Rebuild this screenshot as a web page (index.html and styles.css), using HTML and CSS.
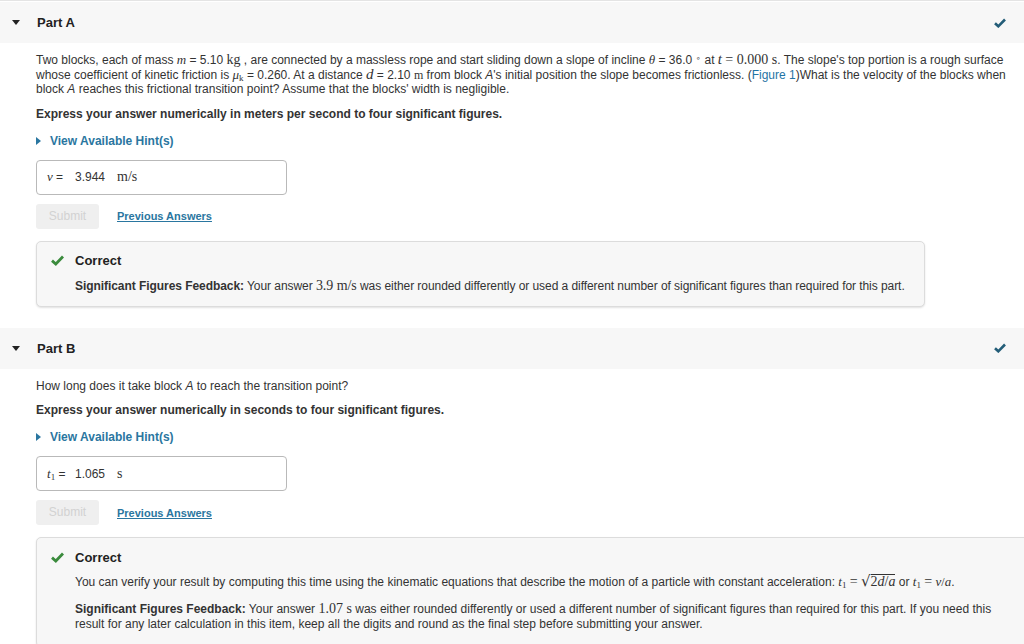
FILE: index.html
```html
<!DOCTYPE html>
<html>
<head>
<meta charset="utf-8">
<link rel="stylesheet" href="styles.css">
</head>
<body>
<div class="part">
  <div class="part-header">
    <span class="caret"></span>
    <span class="part-title">Part A</span>
    <svg class="done" width="12" height="10" viewBox="0 0 12 10"><path d="M1 5.2 L4.3 8.3 L11 1.5" fill="none" stroke="#235d78" stroke-width="2.6"/></svg>
  </div>
  <div class="part-body">
    <p class="problem">Two blocks, each of mass <i class="m">m</i> = 5.10 <span class="mr big">kg</span> , are connected by a massless rope and start sliding down a slope of incline <i class="m">θ</i> = 36.0 <sup class="deg">∘</sup> at <i class="m big">t</i> <span class="mr big">= 0.000 s</span>. The slope's top portion is a rough surface whose coefficient of kinetic friction is <i class="m">μ</i><sub class="mr">k</sub> = 0.260. At a distance <i class="m big">d</i> = 2.10 <span class="mr">m</span> from block <i>A</i>'s initial position the slope becomes frictionless. (<a class="fig">Figure 1</a>)What is the velocity of the blocks when block <i>A</i> reaches this frictional transition point? Assume that the blocks' width is negligible.</p>
    <p class="instr">Express your answer numerically in meters per second to four significant figures.</p>
    <div class="hint"><span class="hcaret"></span>View Available Hint(s)</div>
    <div class="answer"><span class="lbl"><i class="m">v</i> =</span><span class="val">3.944</span><span class="unit mr">m/s</span></div>
    <div class="actions"><span class="submit">Submit</span><a class="prev">Previous Answers</a></div>
    <div class="feedback">
      <div class="fb-head"><svg class="ok" width="13" height="11" viewBox="0 0 13 11"><path d="M1 5.6 L4.8 9 L12 1.6" fill="none" stroke="#3b8b3d" stroke-width="2.8"/></svg><b>Correct</b></div>
      <p class="fb-text"><b>Significant Figures Feedback:</b> Your answer <span class="mr big">3.9 m/s</span> was either rounded differently or used a different number of significant figures than required for this part.</p>
    </div>
  </div>
</div>
<div class="part partb">
  <div class="part-header">
    <span class="caret"></span>
    <span class="part-title">Part B</span>
    <svg class="done" width="12" height="10" viewBox="0 0 12 10"><path d="M1 5.2 L4.3 8.3 L11 1.5" fill="none" stroke="#235d78" stroke-width="2.6"/></svg>
  </div>
  <div class="part-body">
    <p class="problem">How long does it take block <i>A</i> to reach the transition point?</p>
    <p class="instr">Express your answer numerically in seconds to four significant figures.</p>
    <div class="hint"><span class="hcaret"></span>View Available Hint(s)</div>
    <div class="answer"><span class="lbl"><i class="m">t</i><sub class="mr">1</sub> =</span><span class="val">1.065</span><span class="unit mr">s</span></div>
    <div class="actions"><span class="submit">Submit</span><a class="prev">Previous Answers</a></div>
    <div class="feedback wide">
      <div class="fb-head"><svg class="ok" width="13" height="11" viewBox="0 0 13 11"><path d="M1 5.6 L4.8 9 L12 1.6" fill="none" stroke="#3b8b3d" stroke-width="2.8"/></svg><b>Correct</b></div>
      <p class="fb-text">You can verify your result by computing this time using the kinematic equations that describe the motion of a particle with constant acceleration: <span class="eq"><i class="m">t</i><sub class="mr">1</sub> <span class="mr big">=</span> <span class="rad">√</span><span class="under"><span class="mr">2</span><i class="m">d</i><span class="mr">/</span><i class="m">a</i></span></span> or <span class="eq"><i class="m">t</i><sub class="mr">1</sub> <span class="mr big">=</span> <i class="m">v</i><span class="mr">/</span><i class="m">a</i></span>.</p>
      <p class="fb-text"><b>Significant Figures Feedback:</b> Your answer <span class="mr big">1.07 s</span> was either rounded differently or used a different number of significant figures than required for this part. If you need this result for any later calculation in this item, keep all the digits and round as the final step before submitting your answer.</p>
    </div>
  </div>
</div>
</body>
</html>
```
FILE: styles.css
```css
html, body {
  margin: 0;
  padding: 0;
  background: #fff;
}
body {
  font-family: "Liberation Sans", Arial, sans-serif;
  font-size: 12px;
  color: #333;
  border-top: 1px solid #e4e4e4;
  overflow: hidden;
  height: 643px;
}
.part-header {
  height: 41px;
  margin-top: 1px;
  background: #f7f7f7;
  display: flex;
  align-items: center;
  padding: 0 18px 0 12px;
}
.partb {
  margin-top: 21px;
}
.partb .part-header {
  margin-top: 0;
}
.caret {
  width: 0;
  height: 0;
  border-left: 4.5px solid transparent;
  border-right: 4.5px solid transparent;
  border-top: 5px solid #222;
  margin-right: 17px;
}
.part-title {
  font-weight: bold;
  font-size: 13px;
  color: #222;
  flex: 1;
}
.done {
  display: block;
}
.part-body {
  padding-left: 36px;
}
p {
  margin: 0;
}
.problem {
  margin-top: 10px;
  line-height: 14.5px;
  padding-right: 10px;
}
.m {
  font-family: "Liberation Serif", "Times New Roman", serif;
  font-style: italic;
  font-size: 13px;
  line-height: 0;
}
.mr {
  font-family: "Liberation Serif", "Times New Roman", serif;
  font-style: normal;
  line-height: 0;
}
.big {
  font-size: 14px;
}
.m.big {
  font-size: 15px;
}
sub.mr {
  font-size: 9px;
  vertical-align: -2px;
  line-height: 0;
}
.deg {
  font-family: "DejaVu Sans", sans-serif;
  font-size: 9px;
  vertical-align: 3px;
  line-height: 0;
  color: #555;
}
.fig {
  color: #1f74a4;
}
.instr {
  margin-top: 10px;
  font-weight: bold;
  line-height: 14px;
}
.hint {
  margin-top: 13px;
  line-height: 14px;
  font-weight: bold;
  color: #2a76a0;
  display: flex;
  align-items: center;
}
.hcaret {
  width: 0;
  height: 0;
  border-top: 4.5px solid transparent;
  border-bottom: 4.5px solid transparent;
  border-left: 5px solid #2a76a0;
  margin-right: 9px;
}
.answer {
  margin-top: 12px;
  width: 239px;
  height: 33px;
  border: 1px solid #b9b9b9;
  border-radius: 4px;
  display: flex;
  align-items: center;
  padding-left: 10px;
  box-sizing: content-box;
}
.lbl {
  width: 28px;
}
.lbl .m {
  font-size: 13px;
}
.val {
  width: 42px;
}
.unit {
  font-size: 14px;
}
.actions {
  margin-top: 9px;
  display: flex;
  align-items: center;
}
.submit {
  width: 63px;
  height: 25px;
  line-height: 25px;
  text-align: center;
  background: #efefef;
  color: #d2d2d2;
  border-radius: 3px;
  font-size: 12px;
}
.prev {
  margin-left: 18px;
  color: #2a76a0;
  font-weight: bold;
  font-size: 11px;
  text-decoration: underline;
}
.feedback {
  margin-top: 12px;
  width: 889px;
  box-sizing: border-box;
  background: #f7f7f7;
  border: 1px solid #dcdcdc;
  border-radius: 5px;
  box-shadow: 0 1px 2px rgba(0,0,0,0.12);
  padding: 12px 2px 12px 14px;
}
.feedback.wide {
  width: 1000px;
  padding-right: 14px;
  padding-bottom: 14px;
}
.fb-head {
  display: flex;
  align-items: center;
  height: 14px;
}
.fb-head b {
  font-size: 13px;
  color: #222;
}
.ok {
  display: block;
  margin-right: 11px;
}
.fb-text {
  margin-top: 11px;
  padding-left: 24px;
  line-height: 15px;
  letter-spacing: -0.06px;
}
.wide .fb-text {
  padding-right: 10px;
  letter-spacing: 0;
}
.wide .fb-text + .fb-text {
  margin-top: 12px;
}
.eq {
  white-space: nowrap;
}
.rad {
  font-family: "DejaVu Serif", serif;
  font-size: 15px;
  line-height: 0;
}
.under {
  border-top: 1px solid #333;
  line-height: 0;
}
.under .m,
.under .mr {
  font-size: 14px;
}
```
